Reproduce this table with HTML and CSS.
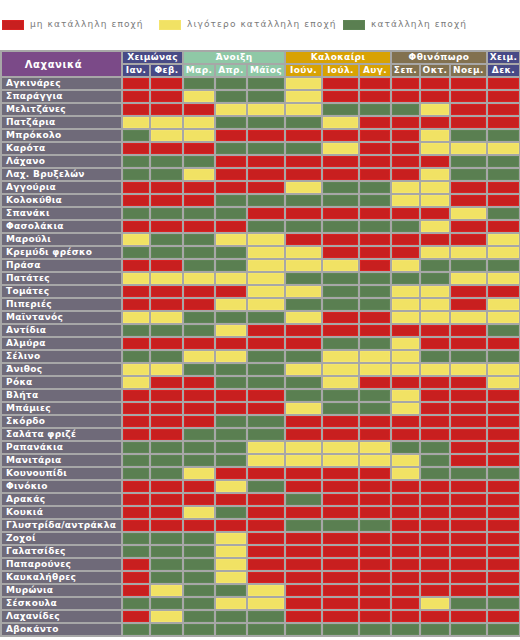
FILE: index.html
```html
<!DOCTYPE html>
<html lang="el">
<head>
<meta charset="utf-8">
<title>Εποχικότητα λαχανικών</title>
<link rel="stylesheet" href="styles.css">
</head>
<body>
<div class="legend">
  <div class="item"><span class="sw r"></span><span>μη κατάλληλη εποχή</span></div>
  <div class="item"><span class="sw y"></span><span>λιγότερο κατάλληλη εποχή</span></div>
  <div class="item"><span class="sw g"></span><span>κατάλληλη εποχή</span></div>
</div>
<div class="chart">
  <div class="h title">Λαχανικά</div>
  <div class="h win span2">Χειμώνας</div>
  <div class="h spr span3">Άνοιξη</div>
  <div class="h sum span3">Καλοκαίρι</div>
  <div class="h aut span3">Φθινόπωρο</div>
  <div class="h win">Χειμ.</div>
  <div class="h win">Ιαν.</div><div class="h win">Φεβ.</div>
  <div class="h spr">Μαρ.</div><div class="h spr">Απρ.</div><div class="h spr">Μάϊος</div>
  <div class="h sum">Ιούν.</div><div class="h sum">Ιούλ.</div><div class="h sum">Αυγ.</div>
  <div class="h aut">Σεπ.</div><div class="h aut">Οκτ.</div><div class="h aut">Νοεμ.</div>
  <div class="h win">Δεκ.</div>

  <div class="n">Αγκινάρες</div><i class="r"></i><i class="r"></i><i class="g"></i><i class="g"></i><i class="g"></i><i class="y"></i><i class="r"></i><i class="r"></i><i class="r"></i><i class="r"></i><i class="r"></i><i class="r"></i>
  <div class="n">Σπαράγγια</div><i class="r"></i><i class="r"></i><i class="y"></i><i class="g"></i><i class="g"></i><i class="y"></i><i class="r"></i><i class="r"></i><i class="r"></i><i class="r"></i><i class="r"></i><i class="r"></i>
  <div class="n">Μελιτζάνες</div><i class="r"></i><i class="r"></i><i class="r"></i><i class="y"></i><i class="y"></i><i class="y"></i><i class="g"></i><i class="g"></i><i class="g"></i><i class="y"></i><i class="r"></i><i class="r"></i>
  <div class="n">Πατζάρια</div><i class="y"></i><i class="y"></i><i class="y"></i><i class="g"></i><i class="g"></i><i class="g"></i><i class="y"></i><i class="r"></i><i class="r"></i><i class="r"></i><i class="r"></i><i class="r"></i>
  <div class="n">Μπρόκολο</div><i class="g"></i><i class="y"></i><i class="y"></i><i class="r"></i><i class="r"></i><i class="r"></i><i class="r"></i><i class="r"></i><i class="r"></i><i class="y"></i><i class="g"></i><i class="g"></i>
  <div class="n">Καρότα</div><i class="r"></i><i class="r"></i><i class="r"></i><i class="g"></i><i class="g"></i><i class="g"></i><i class="y"></i><i class="r"></i><i class="r"></i><i class="y"></i><i class="y"></i><i class="y"></i>
  <div class="n">Λάχανο</div><i class="g"></i><i class="g"></i><i class="g"></i><i class="r"></i><i class="r"></i><i class="r"></i><i class="r"></i><i class="r"></i><i class="r"></i><i class="r"></i><i class="g"></i><i class="g"></i>
  <div class="n">Λαχ. Βρυξελών</div><i class="g"></i><i class="g"></i><i class="y"></i><i class="r"></i><i class="r"></i><i class="r"></i><i class="r"></i><i class="r"></i><i class="r"></i><i class="y"></i><i class="g"></i><i class="g"></i>
  <div class="n">Αγγούρια</div><i class="r"></i><i class="r"></i><i class="r"></i><i class="r"></i><i class="r"></i><i class="y"></i><i class="g"></i><i class="g"></i><i class="y"></i><i class="y"></i><i class="r"></i><i class="r"></i>
  <div class="n">Κολοκύθια</div><i class="r"></i><i class="r"></i><i class="r"></i><i class="g"></i><i class="g"></i><i class="g"></i><i class="g"></i><i class="g"></i><i class="y"></i><i class="y"></i><i class="r"></i><i class="r"></i>
  <div class="n">Σπανάκι</div><i class="g"></i><i class="g"></i><i class="g"></i><i class="g"></i><i class="r"></i><i class="r"></i><i class="r"></i><i class="r"></i><i class="r"></i><i class="r"></i><i class="y"></i><i class="g"></i>
  <div class="n">Φασολάκια</div><i class="r"></i><i class="r"></i><i class="r"></i><i class="r"></i><i class="g"></i><i class="g"></i><i class="g"></i><i class="g"></i><i class="g"></i><i class="y"></i><i class="r"></i><i class="r"></i>
  <div class="n">Μαρούλι</div><i class="y"></i><i class="g"></i><i class="g"></i><i class="y"></i><i class="y"></i><i class="r"></i><i class="r"></i><i class="r"></i><i class="r"></i><i class="r"></i><i class="r"></i><i class="y"></i>
  <div class="n">Κρεμύδι φρέσκο</div><i class="g"></i><i class="g"></i><i class="g"></i><i class="g"></i><i class="y"></i><i class="y"></i><i class="r"></i><i class="r"></i><i class="r"></i><i class="y"></i><i class="y"></i><i class="y"></i>
  <div class="n">Πράσα</div><i class="r"></i><i class="r"></i><i class="g"></i><i class="g"></i><i class="y"></i><i class="y"></i><i class="y"></i><i class="r"></i><i class="y"></i><i class="g"></i><i class="g"></i><i class="g"></i>
  <div class="n">Πατάτες</div><i class="y"></i><i class="y"></i><i class="y"></i><i class="y"></i><i class="y"></i><i class="g"></i><i class="g"></i><i class="g"></i><i class="g"></i><i class="g"></i><i class="y"></i><i class="y"></i>
  <div class="n">Τομάτες</div><i class="r"></i><i class="r"></i><i class="r"></i><i class="r"></i><i class="y"></i><i class="y"></i><i class="g"></i><i class="g"></i><i class="y"></i><i class="y"></i><i class="r"></i><i class="r"></i>
  <div class="n">Πιπεριές</div><i class="r"></i><i class="r"></i><i class="r"></i><i class="y"></i><i class="y"></i><i class="g"></i><i class="g"></i><i class="g"></i><i class="y"></i><i class="y"></i><i class="r"></i><i class="y"></i>
  <div class="n">Μαϊντανός</div><i class="y"></i><i class="y"></i><i class="g"></i><i class="g"></i><i class="g"></i><i class="y"></i><i class="r"></i><i class="r"></i><i class="y"></i><i class="y"></i><i class="y"></i><i class="y"></i>
  <div class="n">Αντίδια</div><i class="g"></i><i class="g"></i><i class="g"></i><i class="y"></i><i class="r"></i><i class="r"></i><i class="r"></i><i class="r"></i><i class="r"></i><i class="r"></i><i class="r"></i><i class="g"></i>
  <div class="n">Αλμύρα</div><i class="r"></i><i class="r"></i><i class="r"></i><i class="r"></i><i class="r"></i><i class="r"></i><i class="g"></i><i class="g"></i><i class="y"></i><i class="r"></i><i class="r"></i><i class="r"></i>
  <div class="n">Σέλινο</div><i class="g"></i><i class="g"></i><i class="y"></i><i class="y"></i><i class="g"></i><i class="g"></i><i class="y"></i><i class="y"></i><i class="y"></i><i class="g"></i><i class="g"></i><i class="g"></i>
  <div class="n">Άνιθος</div><i class="y"></i><i class="y"></i><i class="g"></i><i class="g"></i><i class="g"></i><i class="y"></i><i class="y"></i><i class="y"></i><i class="y"></i><i class="y"></i><i class="y"></i><i class="y"></i>
  <div class="n">Ρόκα</div><i class="y"></i><i class="r"></i><i class="r"></i><i class="g"></i><i class="g"></i><i class="g"></i><i class="y"></i><i class="r"></i><i class="r"></i><i class="r"></i><i class="r"></i><i class="y"></i>
  <div class="n">Βλήτα</div><i class="r"></i><i class="r"></i><i class="r"></i><i class="r"></i><i class="r"></i><i class="g"></i><i class="g"></i><i class="g"></i><i class="y"></i><i class="r"></i><i class="r"></i><i class="r"></i>
  <div class="n">Μπάμιες</div><i class="r"></i><i class="r"></i><i class="r"></i><i class="r"></i><i class="r"></i><i class="y"></i><i class="g"></i><i class="g"></i><i class="y"></i><i class="r"></i><i class="r"></i><i class="r"></i>
  <div class="n">Σκόρδο</div><i class="r"></i><i class="r"></i><i class="r"></i><i class="g"></i><i class="g"></i><i class="r"></i><i class="r"></i><i class="r"></i><i class="r"></i><i class="r"></i><i class="r"></i><i class="r"></i>
  <div class="n">Σαλάτα φριζέ</div><i class="r"></i><i class="r"></i><i class="g"></i><i class="g"></i><i class="g"></i><i class="r"></i><i class="r"></i><i class="r"></i><i class="r"></i><i class="r"></i><i class="r"></i><i class="r"></i>
  <div class="n">Ραπανάκια</div><i class="g"></i><i class="g"></i><i class="g"></i><i class="g"></i><i class="y"></i><i class="y"></i><i class="y"></i><i class="y"></i><i class="g"></i><i class="g"></i><i class="r"></i><i class="r"></i>
  <div class="n">Μανιτάρια</div><i class="g"></i><i class="g"></i><i class="g"></i><i class="g"></i><i class="y"></i><i class="y"></i><i class="y"></i><i class="y"></i><i class="y"></i><i class="g"></i><i class="r"></i><i class="r"></i>
  <div class="n">Κουνουπίδι</div><i class="g"></i><i class="g"></i><i class="y"></i><i class="r"></i><i class="r"></i><i class="r"></i><i class="r"></i><i class="r"></i><i class="y"></i><i class="g"></i><i class="g"></i><i class="g"></i>
  <div class="n">Φινόκιο</div><i class="r"></i><i class="r"></i><i class="r"></i><i class="y"></i><i class="g"></i><i class="r"></i><i class="r"></i><i class="r"></i><i class="r"></i><i class="r"></i><i class="r"></i><i class="r"></i>
  <div class="n">Αρακάς</div><i class="r"></i><i class="r"></i><i class="r"></i><i class="r"></i><i class="r"></i><i class="g"></i><i class="r"></i><i class="r"></i><i class="r"></i><i class="r"></i><i class="r"></i><i class="r"></i>
  <div class="n">Κουκιά</div><i class="r"></i><i class="r"></i><i class="y"></i><i class="g"></i><i class="r"></i><i class="r"></i><i class="r"></i><i class="r"></i><i class="r"></i><i class="r"></i><i class="r"></i><i class="r"></i>
  <div class="n">Γλυστρίδα/αντράκλα</div><i class="r"></i><i class="r"></i><i class="r"></i><i class="r"></i><i class="r"></i><i class="g"></i><i class="g"></i><i class="g"></i><i class="r"></i><i class="r"></i><i class="r"></i><i class="r"></i>
  <div class="n">Ζοχοί</div><i class="g"></i><i class="g"></i><i class="g"></i><i class="y"></i><i class="r"></i><i class="r"></i><i class="r"></i><i class="r"></i><i class="r"></i><i class="r"></i><i class="r"></i><i class="r"></i>
  <div class="n">Γαλατσίδες</div><i class="g"></i><i class="g"></i><i class="g"></i><i class="y"></i><i class="r"></i><i class="r"></i><i class="r"></i><i class="r"></i><i class="r"></i><i class="r"></i><i class="r"></i><i class="r"></i>
  <div class="n">Παπαρούνες</div><i class="r"></i><i class="g"></i><i class="g"></i><i class="y"></i><i class="r"></i><i class="r"></i><i class="r"></i><i class="r"></i><i class="r"></i><i class="r"></i><i class="r"></i><i class="r"></i>
  <div class="n">Καυκαλήθρες</div><i class="r"></i><i class="g"></i><i class="g"></i><i class="y"></i><i class="r"></i><i class="r"></i><i class="r"></i><i class="r"></i><i class="r"></i><i class="r"></i><i class="r"></i><i class="r"></i>
  <div class="n">Μυρώνια</div><i class="r"></i><i class="y"></i><i class="g"></i><i class="g"></i><i class="y"></i><i class="r"></i><i class="r"></i><i class="r"></i><i class="r"></i><i class="r"></i><i class="r"></i><i class="r"></i>
  <div class="n">Σέσκουλα</div><i class="g"></i><i class="g"></i><i class="g"></i><i class="y"></i><i class="y"></i><i class="r"></i><i class="r"></i><i class="r"></i><i class="r"></i><i class="y"></i><i class="g"></i><i class="g"></i>
  <div class="n">Λαχανίδες</div><i class="r"></i><i class="y"></i><i class="g"></i><i class="g"></i><i class="g"></i><i class="r"></i><i class="r"></i><i class="r"></i><i class="r"></i><i class="r"></i><i class="r"></i><i class="r"></i>
  <div class="n">Αβοκάντο</div><i class="g"></i><i class="g"></i><i class="g"></i><i class="g"></i><i class="g"></i><i class="g"></i><i class="g"></i><i class="g"></i><i class="g"></i><i class="g"></i><i class="g"></i><i class="g"></i>
</div>
</body>
</html>
```
FILE: styles.css
```css
html, body {
  margin: 0;
  padding: 0;
  background: #ffffff;
}

body {
  width: 520px;
  font-family: "DejaVu Sans", "Noto Sans", sans-serif;
}

.legend {
  display: grid;
  grid-template-columns: 157px 184px auto;
  padding: 19px 0 0 2px;
  height: 11px;
  margin-bottom: 20px;
}

.legend .item {
  display: flex;
  align-items: center;
  gap: 6px;
  font-size: 9px;
  letter-spacing: 1.1px;
  color: #7a7a7a;
  line-height: 11px;
  white-space: nowrap;
}

.legend .sw {
  display: block;
  flex: none;
  width: 22px;
  height: 10px;
}

.chart {
  display: grid;
  grid-template-columns: 119px 26px 31px 30px 30px 36px 35px 35px 30px 27px 28px 35px 31px;
  grid-auto-rows: 11px;
  gap: 2px;
  padding: 2px;
  width: max-content;
  background: #a7a7a7;
}

.h {
  color: #ffffff;
  font-size: 9px;
  font-weight: bold;
  letter-spacing: 0.4px;
  line-height: 11px;
  text-align: center;
  white-space: nowrap;
  overflow: hidden;
}

.title {
  grid-row: span 2;
  background: #7b4a88;
  display: flex;
  align-items: center;
  justify-content: center;
  padding-right: 16px;
  font-size: 10px;
  letter-spacing: 0.6px;
}

.span2 { grid-column: span 2; }
.span3 { grid-column: span 3; }

.win { background: #484a86; }
.spr { background: #8fc8a6; }
.sum { background: #d8a203; }
.aut { background: #82714f; }

.n {
  background: #6f6a79;
  color: #ffffff;
  font-size: 9px;
  font-weight: bold;
  letter-spacing: 0.3px;
  line-height: 11px;
  padding-left: 4px;
  white-space: nowrap;
  overflow: hidden;
}

.chart i {
  display: block;
}

.r { background: #c81f1f; box-shadow: inset 0 0 0 1px #d92222; }
.y { background: #f1e264; box-shadow: inset 0 0 0 1px #f4e46c; }
.g { background: #5a7f51; box-shadow: inset 0 0 0 1px #5f8556; }
```
